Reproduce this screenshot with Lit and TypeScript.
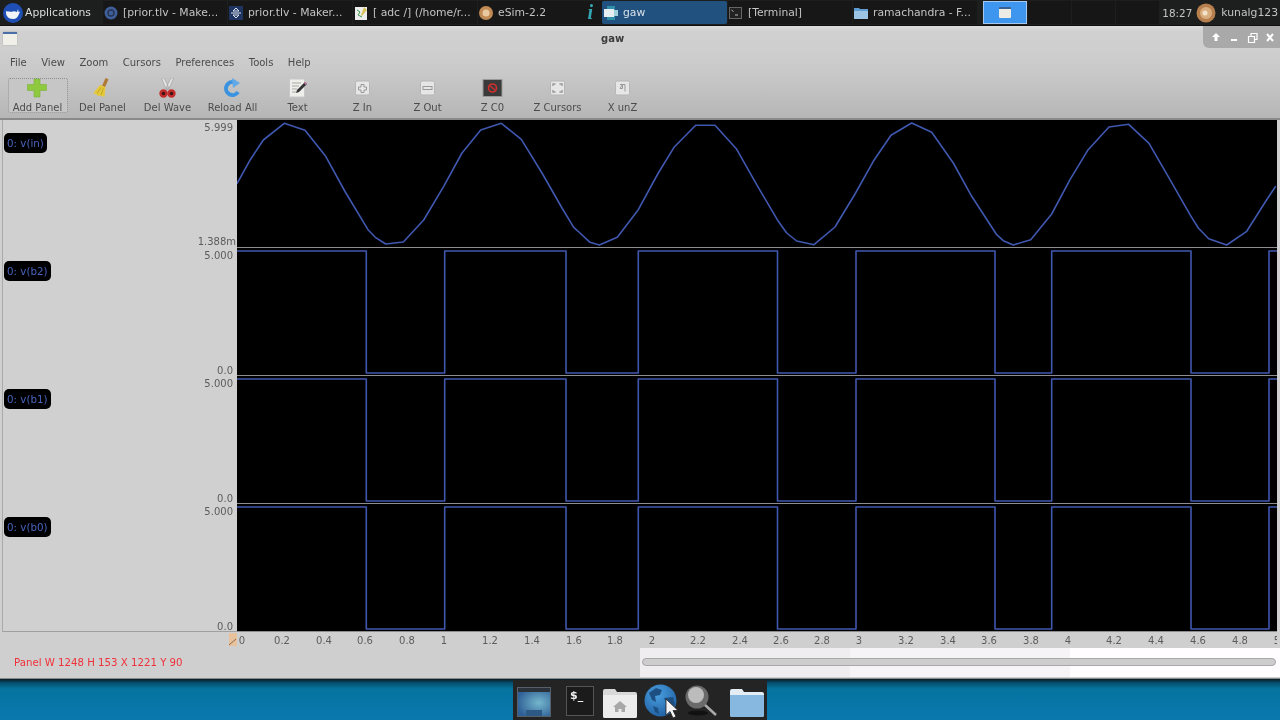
import { LitElement, css, html, svg } from 'lit';
import { customElement } from 'lit/decorators.js';

const SINE = [
  [237, 183.7], [250.3, 159.7], [263.3, 140], [284.3, 123.3], [305, 130.3], [325.7, 156.3], [345.3, 192], [368, 229.7],
  [375.3, 237.3], [385.7, 244], [403.3, 242], [423.7, 220], [443.7, 186.3], [462, 153], [480.7, 130], [501.3, 123.3],
  [521.3, 139.3], [542, 173], [562, 208], [573.7, 227.3], [580, 233], [590, 242.3], [599.3, 245], [617.3, 237.3],
  [638.3, 209.7], [658.3, 173], [674, 147.3], [695.7, 125.3], [715, 125.3], [736.3, 148.7], [756.7, 184.7], [778.3, 221.3],
  [786.7, 233], [796.7, 241], [814, 244.7], [835, 227], [855, 194], [873.3, 161.3], [891, 135.3], [911.7, 123],
  [931.7, 132.3], [953.3, 163], [971.7, 196.3], [996.7, 234.7], [1003.3, 240.7], [1013.3, 245], [1030.7, 239.7], [1051.7, 214],
  [1070, 179.7], [1087.7, 150.3], [1109, 127], [1128.7, 124.3], [1149, 143.3], [1170, 179.7], [1190, 214.7], [1198.3, 228],
  [1208.7, 238.7], [1226.7, 245], [1246.7, 231.3], [1266.7, 199.7], [1275.7, 186.3],
];

const EDGES = [366.3, 444.7, 566, 638.3, 777.5, 856, 995, 1051.7, 1191, 1269];

const AXIS: [string, number][] = [
  ['0', 242], ['0.2', 282], ['0.4', 324], ['0.6', 365], ['0.8', 407], ['1', 444], ['1.2', 490], ['1.4', 532], ['1.6', 574],
  ['1.8', 615], ['2', 652], ['2.2', 698], ['2.4', 740], ['2.6', 781], ['2.8', 822], ['3', 859], ['3.2', 906], ['3.4', 948],
  ['3.6', 989], ['3.8', 1031], ['4', 1068], ['4.2', 1114], ['4.4', 1156], ['4.6', 1198], ['4.8', 1240], ['5', 1277],
];

// square wave in plot coordinates, starts high at the left edge
function digital() {
  const hi = 3;
  const lo = 125;
  const pts = [`0,${hi}`];
  let level = hi;
  for (const e of EDGES) {
    const x = e - 237;
    pts.push(`${x},${level}`);
    level = level === hi ? lo : hi;
    pts.push(`${x},${level}`);
  }
  pts.push(`1040,${level}`);
  return pts.join(' ');
}

const sinePts = SINE.map(([x, y]) => `${x - 237},${y - 120}`).join(' ');
const digitalPts = digital();

const PANELS = [
  { name: '0: v(in)', top: '5.999', bottom: '1.388m', pts: sinePts },
  { name: '0: v(b2)', top: '5.000', bottom: '0.0', pts: digitalPts },
  { name: '0: v(b1)', top: '5.000', bottom: '0.0', pts: digitalPts },
  { name: '0: v(b0)', top: '5.000', bottom: '0.0', pts: digitalPts },
];

const TASKS = [
  { label: '[prior.tlv - Make...', icon: svg`<circle cx="8" cy="8" r="6.500" fill="#3f5f9a"/><circle cx="8" cy="8" r="3" fill="none" stroke="#26344f" stroke-width="1.400"/>` },
  { label: 'prior.tlv - Maker...', icon: svg`<rect x="1" y="1" width="14" height="14" fill="#1d3560"/><path d="M8 3l3 3H5zM8 13l3-3H5z" fill="none" stroke="#dfe6ef"/><path d="M3 8h10" stroke="#dfe6ef"/>` },
  { label: '[ adc /] (/home/r...', icon: svg`<rect x="2" y="2" width="12" height="13" fill="#eee"/><path d="M4 5l3 2-2 3 4 2" fill="none" stroke="#3a9a4a"/><path d="M11 2l3 3-5 6-1-1z" fill="#d9c35a"/>` },
  { label: 'eSim-2.2', icon: svg`<circle cx="8" cy="8" r="7" fill="#c08a55"/><circle cx="8" cy="8" r="3.500" fill="#e8c9a0"/>`, info: true },
  { label: 'gaw', active: true, icon: svg`<rect x="4" y="1" width="8" height="14" fill="#2f8fa8"/><rect x="1" y="4" width="10" height="8" fill="#e6eef2"/><rect x="11" y="5" width="4" height="6" fill="#9fd0dc"/>` },
  { label: '[Terminal]', icon: svg`<rect x="1.500" y="2.500" width="12" height="11" fill="#222" stroke="#666"/><path d="M3.500 5l2 1.500M7 10h3" stroke="#bbb"/>` },
  { label: 'ramachandra - F...', icon: svg`<path d="M1 3h5l1 1h8v10H1z" fill="#5f9ccf"/><path d="M1 6h14v8H1z" fill="#9cc4e4"/>` },
];

const box = (inner: unknown) => svg`<rect x="3.500" y="3" width="14" height="14" rx="1.500" fill="#e6e6e6" stroke="#b6b6b6"/>${inner}`;

const TOOLS = [
  { label: 'Add Panel', focus: true, icon: svg`<path d="M7 1h6v5.500h6.500v6H13V19H7v-6.500H.5v-6H7z" fill="#8fc93f" stroke="#7bae38" stroke-width=".6"/>` },
  { label: 'Del Panel', icon: svg`<path d="M13.500 0l3 1.200-3.500 8-3-1.200z" fill="#b07a35"/><path d="M8 7l5.500 2-1 10-4.500-1.500-2 .5-2-2-3-.5z" fill="#e3c93a"/><path d="M5 15.500l4-6M9 17l2.500-7" stroke="#b89a22" stroke-width=".7"/>` },
  { label: 'Del Wave', icon: svg`<path d="M4.500 0l2.500 0 5 10-2.500 2zM16.500 0L14 0 9 10l2.500 2z" fill="#e6e6e6" stroke="#8d8d8d" stroke-width=".5"/><circle cx="6.500" cy="15.500" r="3" fill="#3a1616" stroke="#c42b2b" stroke-width="2.400"/><circle cx="14.500" cy="15.500" r="3" fill="#3a1616" stroke="#c42b2b" stroke-width="2.400"/>` },
  { label: 'Reload All', icon: svg`<path d="M16 14a6.500 6.500 0 1 1-3-9.500" fill="none" stroke="#3a93e0" stroke-width="4"/><path d="M10 0l8 5-7 5z" fill="#62a9e6"/>` },
  { label: 'Text', icon: svg`<rect x="2.500" y="1" width="15" height="18" fill="#eeeeea" stroke="#c8c8c8"/><path d="M5 5h9M5 8h7M5 11h5M5 14h4" stroke="#a8a8a4"/><path d="M18 4l2 2-8 8-3 1 1-3z" fill="#333"/><path d="M18 4l2 2-1 1-2-2z" fill="#d878b0"/>` },
  { label: 'Z In', icon: box(svg`<path d="M9 6.500h3v2.500h2.500v3H12v2.500H9V12H6.500V9H9z" fill="none" stroke="#999"/>`) },
  { label: 'Z Out', icon: box(svg`<rect x="6" y="8.500" width="9" height="3" fill="none" stroke="#999"/>`) },
  { label: 'Z C0', icon: svg`<rect x="1" y="1.500" width="19" height="17" fill="#3a3a3a" stroke="#999"/><circle cx="10.500" cy="10" r="4" fill="none" stroke="#cf3030" stroke-width="1.600"/><path d="M7.500 7.500l6 5" stroke="#cf3030" stroke-width="1.400"/>` },
  { label: 'Z Cursors', icon: box(svg`<path d="M6 8V6h2.500M12.500 6H15v2M6 12v2h2.500M12.500 14H15v-2" fill="none" stroke="#999" stroke-width="1.400"/>`) },
  { label: 'X unZ', icon: box(svg`<path d="M8 6.500h5v7M10.500 6.500v4H8z" fill="none" stroke="#999"/>`) },
];

@customElement('app-root')
export class AppRoot extends LitElement {
  render() {
    return html`
      <div class="taskbar">
        <div class="apps">
          <svg width="20" height="20" viewBox="0 0 20 20">
            <circle cx="10" cy="10" r="10" fill="#1f4fb4" />
            <path d="M3 8c2 1 3 0 5 1 2-1 4-1 6 0l1-3 .5 3 1.500-.500-1 2.500c-1 3-3 5-6 5-3 0-5-1-6-3-1-1-1-3-1-5z" fill="#f2f4f8" />
          </svg>
          <span>Applications</span>
        </div>
        ${TASKS.map(
          (t) => html`<div class="task ${t.active ? 'active' : ''}">
            <svg width="16" height="16" viewBox="0 0 16 16">${t.icon}</svg>
            <span>${t.label}</span>
            ${t.info ? html`<b class="info">i</b>` : ''}
          </div>`,
        )}
        <div class="workspace"><i></i></div>
        <div class="cell"></div>
        <div class="cell"></div>
        <div class="cell"></div>
        <div class="tray">
          <span class="clock">18:27</span>
          <svg width="20" height="20" viewBox="0 0 20 20">
            <circle cx="10" cy="10" r="9.500" fill="#b77f4e" />
            <circle cx="10" cy="10" r="6" fill="#d9ae7e" />
            <circle cx="9" cy="10" r="2.500" fill="#f3e3cb" />
          </svg>
          <span>kunalg123</span>
        </div>
      </div>

      <div class="window">
        <div class="titlebar">
          <svg class="winicon" width="16" height="15" viewBox="0 0 16 15">
            <rect x=".5" y=".5" width="15" height="14" rx="1" fill="#f0efe8" stroke="#c4c4c4" />
            <rect x="1" y="1" width="14" height="2" fill="#4a6ea8" />
          </svg>
          <div class="title">gaw</div>
          <div class="controls">
            <svg width="70" height="14" viewBox="0 0 70 14">
              <path d="M7 2l4 4H8.500v4h-3V6H3z" fill="#fff" />
              <rect x="22" y="8" width="6" height="2" fill="#fff" />
              <path d="M39.500 5.500h6v6h-6zM42 5V2.500h6v6h-2.500" fill="none" stroke="#fff" stroke-width="1.200" />
              <path d="M58 3l6 7M64 3l-6 7" stroke="#fff" stroke-width="2" />
            </svg>
          </div>
        </div>

        <div class="menu">
          ${['File', 'View', 'Zoom', 'Cursors', 'Preferences', 'Tools', 'Help'].map((m) => html`<span>${m}</span>`)}
        </div>

        <div class="toolbar">
          ${TOOLS.map(
            (t) => html`<div class="tool ${t.focus ? 'focus' : ''}">
              <svg width="21" height="20" viewBox="0 0 21 20">${t.icon}</svg>
              <span>${t.label}</span>
            </div>`,
          )}
        </div>

        <div class="panels">
          ${PANELS.map(
            (p) => html`<div class="panel">
              <div class="side">
                <div class="chip">${p.name}</div>
                <div class="range">
                  <span>${p.top}</span>
                  <span class=${p.bottom.endsWith('m') ? 'wide' : 'low'}>${p.bottom}</span>
                </div>
              </div>
              <svg class="plot" viewBox="0 0 1040 127" width="1040" height="127">
                <polyline points=${p.pts} fill="none" stroke="#4058b0" stroke-width="1.600" stroke-linejoin="round" />
              </svg>
            </div>`,
          )}
        </div>

        <div class="axis">
          <svg class="flag" width="8" height="13" viewBox="0 0 8 13">
            <rect width="8" height="13" fill="#e8c29c" />
            <path d="M0 12L7 6" stroke="#8a6a4a" />
          </svg>
          ${AXIS.map(([l, x]) => html`<span style="left:${x}px">${l}</span>`)}
        </div>

        <div class="status">
          <div class="readout">Panel W 1248 H 153 X 1221 Y 90</div>
          <div class="scroll"><div class="trough"></div></div>
        </div>
      </div>

      <div class="desktop">
        <div class="dock">
          <svg width="34" height="30" viewBox="0 0 34 30">
            <defs>
              <radialGradient id="screen" cx=".65" cy=".45" r=".7">
                <stop offset="0" stop-color="#74b6cc" />
                <stop offset="1" stop-color="#2f5f96" />
              </radialGradient>
            </defs>
            <rect x=".5" y=".5" width="33" height="29" fill="#2b3138" stroke="#55606a" />
            <rect x="1" y="5" width="32" height="24" fill="url(#screen)" />
            <rect x="9" y="23" width="16" height="6" fill="#2c5a84" />
          </svg>
          <div class="term">$_</div>
          <svg width="34" height="30" viewBox="0 0 34 30">
            <path d="M0 3q0-2 2-2h10l2 3h18q2 0 2 2v22q0 2-2 2H2q-2 0-2-2z" fill="#d8d8d8" />
            <path d="M0 7h34v21q0 2-2 2H2q-2 0-2-2z" fill="#ececec" />
            <path d="M17 13l7 6h-2v5h-3.500v-3h-3v3H12v-5h-2z" fill="#a8a8a8" />
          </svg>
          <svg width="33" height="33" viewBox="0 0 33 33">
            <defs>
              <radialGradient id="globe" cx=".4" cy=".3" r=".8">
                <stop offset="0" stop-color="#4aa0e0" />
                <stop offset="1" stop-color="#1c5a9c" />
              </radialGradient>
            </defs>
            <circle cx="16.500" cy="16.500" r="16" fill="url(#globe)" />
            <path d="M5 9l7-5 6 2-2 5-5 1 1 6-4-2zM20 14l9-1 2 8-5 7-4-3 1-5zM9 22l5 2 1 6-4-2z" fill="#1d4f82" />
          </svg>
          <svg width="32" height="31" viewBox="0 0 32 31">
            <ellipse cx="13" cy="28" rx="10" ry="2.500" fill="#111" />
            <circle cx="12" cy="12" r="11.500" fill="#6a6a6a" />
            <circle cx="11" cy="10" r="8" fill="#bcbcbc" />
            <path d="M20 20l11 10" stroke="#aaa" stroke-width="2.500" />
          </svg>
          <svg width="34" height="29" viewBox="0 0 34 29">
            <path d="M0 3q0-2 2-2h10l2 3h18q2 0 2 2v21q0 2-2 2H2q-2 0-2-2z" fill="#e4edf4" />
            <path d="M0 7h34v20q0 2-2 2H2q-2 0-2-2z" fill="#87b8e0" />
          </svg>
          <svg class="pointer" width="14" height="21" viewBox="0 0 14 21">
            <path d="M1 1v16l4-3.500 3 6.500 3-1.500-3-6h5z" fill="#f4f4f4" stroke="#222" stroke-width=".8" />
          </svg>
        </div>
      </div>
    `;
  }

  static styles = css`
    :host {
      display: block;
      width: 1280px;
      height: 720px;
      overflow: hidden;
      font-family: 'DejaVu Sans', sans-serif;
      font-size: 10px;
      filter: blur(0.5px);
    }

    .taskbar {
      height: 26px;
      box-sizing: border-box;
      padding: 1px 0;
      display: flex;
      align-items: stretch;
      background: #1d1f1e;
      border-bottom: 1px solid #111;
      color: #c4c4c4;
      font-size: 10.8px;
    }
    .apps {
      width: 103px;
      display: flex;
      align-items: center;
      gap: 2px;
      padding-left: 3px;
      box-sizing: border-box;
      color: #dcdcdc;
    }
    .task {
      width: 124px;
      margin-right: 1px;
      display: flex;
      align-items: center;
      gap: 4px;
      background: #161716;
      white-space: nowrap;
    }
    .task.active {
      background: #20517f;
      border-radius: 2px;
      margin-left: -1px;
      padding-left: 1px;
      color: #d8e0e8;
    }
    .info {
      margin-left: auto;
      margin-right: 9px;
      font: italic bold 20px 'Liberation Serif', serif;
      color: #35a6b4;
    }
    .workspace {
      width: 44px;
      margin-left: 5px;
      display: flex;
      align-items: center;
      justify-content: center;
      background: #3f96ee;
      border: 1px solid #a8c8ee;
      box-sizing: border-box;
    }
    .workspace i {
      width: 12px;
      height: 9px;
      background: #ecebe4;
      border-top: 2px solid #3a5f92;
      border-radius: 1px;
    }
    .cell {
      width: 43px;
      margin-left: 1px;
      background: #151615;
    }
    .tray {
      flex: 1;
      display: flex;
      align-items: center;
      justify-content: flex-end;
      gap: 5px;
      padding-right: 2px;
      white-space: nowrap;
    }
    .clock {
      font-size: 10.400px;
      margin-right: -1px;
    }

    .window {
      height: 653px;
      display: flex;
      flex-direction: column;
      background: #cfcfcf;
      color: #4b4b4b;
    }
    .titlebar {
      height: 26px;
      display: grid;
      grid-template-columns: 601px auto 1fr;
      background: linear-gradient(#dcdcdc, #d0d0d0 6px, #cfcfcf);
    }
    .winicon {
      margin: 5px 0 0 2px;
    }
    .title {
      font-weight: bold;
      color: #3c3c3c;
      line-height: 26px;
    }
    .controls {
      justify-self: end;
      width: 77px;
      height: 22px;
      box-sizing: border-box;
      padding: 5px 0 0 6px;
      background: #a9a9a9;
      border-bottom-left-radius: 6px;
    }
    .menu {
      height: 20px;
      display: flex;
      align-items: center;
      gap: 14.500px;
      padding-left: 10px;
      background: linear-gradient(#cecece, #c9c9c9);
    }
    .toolbar {
      height: 46px;
      box-sizing: border-box;
      padding: 6px 0 0 5px;
      display: grid;
      grid-template-columns: repeat(10, 65px);
      background: linear-gradient(#c9c9c9, #b6b6b6);
    }
    .tool {
      height: 35px;
      margin: 0 2.500px;
      box-sizing: border-box;
      border: 1px dotted transparent;
      display: flex;
      flex-direction: column;
      align-items: center;
      white-space: nowrap;
      line-height: 12px;
      gap: 4px;
    }
    .tool svg {
      margin-top: -1px;
      flex-shrink: 0;
    }
    .tool.focus {
      border-color: #8f8f8f;
      border-radius: 2px;
      background: #c6c6c6;
    }
    .panels {
      border-top: 2px solid #8a8a8a;
      padding: 0 3px;
      display: grid;
      grid-auto-rows: 128px;
      background: #cfcfcf;
    }
    .panel {
      display: grid;
      grid-template-columns: 234px 1040px;
    }
    .side {
      display: grid;
      grid-template-columns: auto 1fr;
      background: #d0d0d0;
      box-shadow: -1px 0 0 #a9a9a9;
    }
    .panel:last-child .side {
      border-bottom: 1px solid #a0a0a0;
    }
    .chip {
      align-self: start;
      margin: 13px 0 0 1px;
      padding: 0 3px;
      height: 20px;
      line-height: 21px;
      border-radius: 5px;
      background: #000;
      color: #4a64c0;
      font-size: 10.300px;
      white-space: nowrap;
    }
    .range {
      display: flex;
      flex-direction: column;
      justify-content: space-between;
      align-items: flex-end;
      padding: 1px 4px 0 0;
      height: 127px;
      box-sizing: border-box;
      color: #5c5c5c;
      line-height: 13px;
    }
    .range .low {
      margin-bottom: -2px;
    }
    .range .wide {
      margin: 0 -3px -1px 0;
    }
    .plot {
      display: block;
      background: #000;
      border-bottom: 1px solid #8d8d8d;
    }
    .axis {
      position: relative;
      height: 16px;
      margin-right: 3px;
      color: #5c5c5c;
      line-height: 17px;
      overflow: hidden;
    }
    .axis span {
      position: absolute;
      top: 0;
      transform: translateX(-50%);
    }
    .flag {
      position: absolute;
      left: 229px;
      top: 1px;
    }
    .status {
      height: 31px;
      display: grid;
      grid-template-columns: 640px 1fr;
      border-bottom: 1px solid #8a8a8a;
      box-sizing: border-box;
    }
    .readout {
      padding: 8px 0 0 14px;
      color: #f0303a;
      font-size: 10.200px;
      line-height: 13px;
    }
    .scroll {
      height: 29px;
      padding: 10px 4px 0 2px;
      box-sizing: border-box;
      background: linear-gradient(to right, #efedef 210px, #f6f4f6 210px, #f6f4f6 430px, #fffdff 430px);
    }
    .trough {
      height: 8px;
      border: 1px solid #a8a8a8;
      border-radius: 5px;
      background: #cdcdcd;
      box-sizing: border-box;
    }

    .desktop {
      height: 41px;
      display: flex;
      justify-content: flex-end;
      padding-right: 513px;
      background: linear-gradient(#0a1a24, #05516f 4px, #06749f 10px, #0a78ae);
    }
    .dock {
      position: relative;
      width: 254px;
      height: 40px;
      margin-top: 1px;
      box-sizing: border-box;
      padding-left: 4px;
      display: flex;
      align-items: flex-start;
      background: #232423;
    }
    .dock > :nth-child(1) {
      margin-top: 7px;
    }
    .dock > :nth-child(2) {
      margin: 6px 0 0 15px;
    }
    .dock > :nth-child(3) {
      margin: 8px 0 0 9px;
    }
    .dock > :nth-child(4) {
      margin: 4px 0 0 7px;
    }
    .dock > :nth-child(5) {
      margin: 5px 0 0 8px;
    }
    .dock > :nth-child(6) {
      margin: 8px 0 0 13px;
    }
    .term {
      width: 28px;
      height: 30px;
      box-sizing: border-box;
      padding: 3px 0 0 3px;
      background: #1b1b1b;
      border: 1px solid #555;
      color: #eee;
      font-weight: bold;
      font-size: 11px;
      line-height: 12px;
    }
    .pointer {
      position: absolute;
      left: 152px;
      top: 18px;
    }
  `;
}

declare global {
  interface HTMLElementTagNameMap {
    'app-root': AppRoot;
  }
}
